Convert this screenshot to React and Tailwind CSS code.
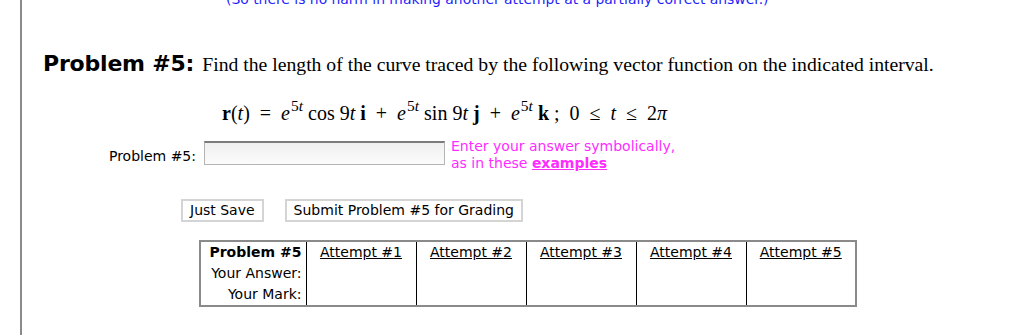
import React from "react";

const sans = { fontFamily: '"DejaVu Sans", Verdana, sans-serif' };

export default function App() {
  const attempts = [1, 2, 3, 4, 5];
  const sup = (
    <sup className="text-[15.5px] top-[-9px] ml-[1px]"><span>5</span><i>t</i></sup>
  );
  return (
    <div className="w-[1024px] h-[335px] bg-white overflow-hidden relative">
      <div className="ml-[20px] h-full border-l-2 border-[#8a8a8a] relative">
        <div
          className="absolute top-[-9px] left-[204px] text-[13.9px] leading-[16px] text-[#1e1eff] whitespace-nowrap"
          style={sans}
        >
          (So there is no harm in making another attempt at a partially correct answer.)
        </div>
        <div className="pt-[50px] pl-[21px] flex items-baseline whitespace-nowrap">
          <span className="font-['DejaVu_Sans'] font-bold text-[22px] leading-[26px] text-black tracking-[-0.2px]">
            Problem #5:
          </span>
          <span className="font-['Liberation_Serif'] text-[19.7px] ml-[8px] text-black">
            Find the length of the curve traced by the following vector function on the indicated interval.
          </span>
        </div>
        <div className="pl-[200px] mt-[20px] font-['Liberation_Serif'] text-[20px] leading-[26px] whitespace-nowrap text-black">
          <b>r</b>(<i>t</i>)&nbsp; = &nbsp;<i>e</i>{sup} cos 9<i>t</i>&nbsp;<b>i</b>&nbsp; + &nbsp;<i>e</i>{sup} sin 9<i>t</i>&nbsp;<b>j</b>&nbsp; + &nbsp;<i>e</i>{sup}&nbsp;<b>k</b> ; &nbsp;0 &nbsp;≤ &nbsp;<i>t</i> &nbsp;≤ &nbsp;2<i>π</i>
        </div>
        <div className="flex items-start mt-[15px]" style={sans}>
          <div className="w-[182px] text-right text-[14px] leading-[16px] pt-[7px] pr-[8px] text-black">Problem #5:</div>
          <div className="w-[241px] h-[24px] border border-[#b5b5b5] border-t-2 border-t-[#7c7c7c] bg-gradient-to-b from-[#f0f0f0] to-[#fbfbfb]"></div>
          <div className="ml-[6px] text-[14px] leading-[17px] text-[#ff2bff] mt-[-3px]">
            <div>Enter your answer symbolically,</div>
            <div>
              as in these <span className="font-bold underline">examples</span>
            </div>
          </div>
        </div>
        <div className="flex mt-[27px] pl-[159px] gap-[21px]" style={sans}>
          <div className="h-[23px] px-[7px] border-2 border-[#d4d4d4] bg-white text-[14px] leading-[19px] text-black">Just Save</div>
          <div className="h-[23px] px-[7px] border-2 border-[#d4d4d4] bg-white text-[14px] leading-[19px] text-black">Submit Problem #5 for Grading</div>
        </div>
        <div className="pl-[177px] mt-[18px]" style={sans}>
          <table className="border-2 border-[#8a8a8a] border-collapse text-[14px] leading-[21px] text-black">
            <tbody>
              <tr>
                <td className="w-[106px] text-right pr-[4px] font-bold border-r border-black align-top">Problem #5</td>
                {attempts.map((n, i) => (
                  <td key={n} className={"w-[110px] text-center align-top " + (i < 4 ? "border-r border-black" : "")} rowSpan={3}>
                    <span className="underline">Attempt #{n}</span>
                  </td>
                ))}
              </tr>
              <tr>
                <td className="text-right pr-[4px] border-r border-black">Your Answer:</td>
              </tr>
              <tr>
                <td className="text-right pr-[4px] border-r border-black">Your Mark:</td>
              </tr>
            </tbody>
          </table>
        </div>
      </div>
    </div>
  );
}
